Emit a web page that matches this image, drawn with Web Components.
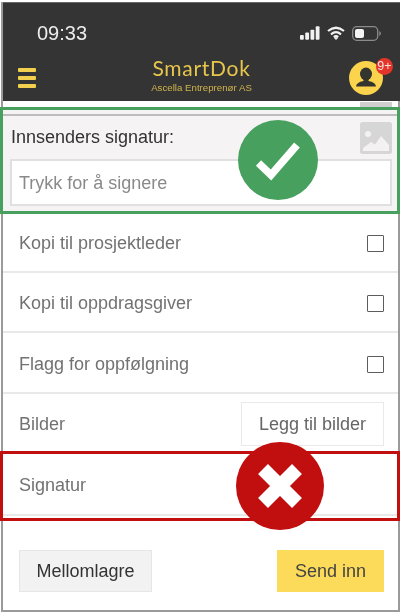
<!DOCTYPE html>
<html lang="nb">
<head>
<meta charset="utf-8">
<title>SmartDok</title>
<style>
html,body{margin:0;padding:0;background:#fff;font-family:"Liberation Sans",Arial,sans-serif}
body{width:400px;height:616px;overflow:hidden}
</style>
</head>
<body>
<template id="t-app"><style>
:host{display:flex;flex-direction:column;box-sizing:border-box;width:399px;height:610px;margin:2px 0 0 1px;border:solid #9a9a9a;border-width:0 2px 2px 2px;background:#fff;filter:blur(.35px)}
</style><slot></slot></template>

<template id="t-top"><style>
:host{display:block;height:99px;margin-right:-2px;background:#343434;border-top:1px solid #666;box-sizing:border-box}
.status{display:flex;align-items:center;justify-content:space-between;height:60px;padding:0 19px 0 34px;box-sizing:border-box}
.time{font:20px "Liberation Sans",Arial,sans-serif;color:#ececec}
.icons{display:flex;align-items:center;gap:7px}
svg{display:block}
.bar{display:grid;grid-template-columns:1fr auto 1fr;align-items:start;padding:0 17px 0 15px;margin-top:-2px}
.burger{display:flex;flex-direction:column;gap:4px;width:18px;padding-top:7px}
.burger i{display:block;height:4px;background:#f2d04e;border-radius:1px}
.brand{display:flex;flex-direction:column;align-items:center;margin:-5.500px 0 0 2px}
.name{font:400 21px/24px Lato,"Noto Sans",sans-serif;letter-spacing:.7px;color:#e6c64c}
.sub{font:9.700px/12px "Liberation Sans",Arial,sans-serif;color:#d0b44c;margin-top:2px}
.user{justify-self:end;position:relative;width:34px;height:34px;border-radius:50%;background:#fbd34d}
.badge{position:absolute;left:27px;top:-3px;width:17px;height:17px;border-radius:50%;background:#e3352a;color:#f6e3dd;font:12.5px/17px "Liberation Sans",Arial,sans-serif;text-align:center}
</style>
<div class="status"><span class="time">09:33</span>
<span class="icons">
<svg width="20" height="14" viewBox="0 0 21 14" fill="#f2f2f2"><rect x="0" y="9" width="4" height="5" rx="1"/><rect x="5.500" y="6.500" width="4" height="7.500" rx="1"/><rect x="11" y="3.500" width="4" height="10.500" rx="1"/><rect x="16.500" y="0" width="4" height="14" rx="1"/></svg>
<svg width="18" height="14" viewBox="0 0 18 14" fill="none" stroke="#f2f2f2" stroke-width="2.200"><path d="M1 5Q9-1.500 17 5"/><path d="M4 8.300Q9 4 14 8.300"/><path d="M6.800 11Q9 9.400 11.200 11"/><path d="M7.500 11.800L9 13.500L10.500 11.800Z" fill="#f2f2f2" stroke-width="1"/></svg>
<svg width="29" height="15" viewBox="0 0 29 15" fill="none"><rect x=".7" y=".7" width="25" height="13.600" rx="4" stroke="#8b8b8b" stroke-width="1.300"/><rect x="3" y="3" width="9" height="9" rx="2" fill="#f4f4f4"/><path d="M27.300 5v5q1.600-.8 1.600-2.500T27.300 5z" fill="#8b8b8b"/></svg>
</span></div>
<div class="bar">
<div class="burger"><i></i><i></i><i></i></div>
<div class="brand"><span class="name">SmartDok</span><span class="sub">Ascella Entreprenør AS</span></div>
<div class="user"><svg width="34" height="34" viewBox="0 0 34 34" fill="#35352f"><ellipse cx="17" cy="13" rx="6" ry="6.500"/><path d="M14.500 17.500L14.500 20Q7.500 21 7 25.500L27 25.500Q26.500 21 19.500 20L19.500 17.500Z"/></svg><span class="badge">9+</span></div>
</div></template>

<template id="t-scroll"><style>
:host{display:flex;justify-content:flex-end;height:9px;padding-right:6px;background:#fff}
i{display:block;width:32px;height:5px;margin-top:1px;background:#d0d0d0}
</style><i></i></template>

<template id="t-panel"><style>
:host{display:block;position:relative;height:102px;box-sizing:border-box;background:#f5f3f4;padding:4px 6px 0 7px;font:18px "Liberation Sans",Arial,sans-serif}
.rule{height:1.500px;background:#bdbdbd;margin:0 -6px 0 -7px}
.head{display:flex;justify-content:space-between;height:43.500px}
.label{color:#333;line-height:20px;padding:11px 0 0 1px;box-sizing:border-box}
.photo{margin-top:6.500px}
.input{box-sizing:border-box;height:47px;border:2px solid #e0e0e0;background:#fff;color:#8a8a8a;padding:1px 7px 0;line-height:43px}
</style>
<div class="rule"></div>
<div class="head"><span class="label"><slot name="label"></slot></span>
<svg class="photo" width="32" height="32" viewBox="0 0 32 32"><rect width="32" height="32" rx="2.500" fill="#d6d6d6"/><circle cx="8" cy="12" r="3" fill="#f3f1f2"/><path d="M3 29L3 26L11 20L15 22.500L21 14L29 23L29 29Z" fill="#f3f1f2"/></svg></div>
<div class="input"><slot name="hint"></slot></div></template>

<template id="t-row"><style>
:host{display:flex;align-items:center;justify-content:space-between;box-sizing:border-box;height:60.500px;padding:3.500px 14px 0 16px;border-bottom:2px solid #e9e9e9;color:#727272;font:18px "Liberation Sans",Arial,sans-serif}
:host([tall]){height:58.500px;padding-top:2.500px;border-bottom:0}
:host([last]){height:64px;padding-top:4px}
</style><slot></slot><slot name="end"></slot></template>

<template id="t-check"><style>
:host{display:block;width:17px;height:17px;box-sizing:border-box;border:1.500px solid #5c5c5c;border-radius:1px;background:#fff}
</style></template>

<template id="t-btn"><style>
:host{display:flex;align-items:center;justify-content:center;box-sizing:border-box;height:42px;border:1.500px solid #e9e9e9;background:#fff;color:#666;font:18px "Liberation Sans",Arial,sans-serif;width:var(--w,auto)}
:host([kind=plain]){height:44px}
:host([kind=grey]){background:#f2f2f2;color:#333;border-color:#e6e6e6}
:host([kind=yellow]){background:#fddb5a;color:#444;border-color:#fddb5a}
</style><slot></slot></template>

<template id="t-foot"><style>
:host{display:flex;justify-content:space-between;padding:34px 14px 0 16px}
</style><slot></slot></template>

<template id="t-mark"><style>
:host{display:block;position:relative}
.box{position:absolute;inset:var(--inset);border:3px solid var(--c);pointer-events:none;z-index:2}
.dot{position:absolute;left:var(--x);top:var(--y);width:var(--d);height:var(--d);z-index:3}
svg{display:block;width:100%;height:100%}
</style><slot></slot><div class="box"></div><div class="dot"></div></template>

<sd-app>
  <sd-top></sd-top>
  <sd-scroll></sd-scroll>
  <sd-mark kind="ok">
    <sd-panel><span slot="label">Innsenders signatur:</span><span slot="hint">Trykk for å signere</span></sd-panel>
  </sd-mark>
  <sd-row>Kopi til prosjektleder<sd-check slot="end"></sd-check></sd-row>
  <sd-row>Kopi til oppdragsgiver<sd-check slot="end"></sd-check></sd-row>
  <sd-row>Flagg for oppfølgning<sd-check slot="end"></sd-check></sd-row>
  <sd-row tall>Bilder<sd-btn slot="end" kind="plain" style="--w:143px">Legg til bilder</sd-btn></sd-row>
  <sd-mark kind="bad">
    <sd-row last>Signatur</sd-row>
  </sd-mark>
  <sd-foot>
    <sd-btn kind="grey" style="--w:133px">Mellomlagre</sd-btn>
    <sd-btn kind="yellow" style="--w:107px">Send inn</sd-btn>
  </sd-foot>
</sd-app>

<script>
function simple(tag, tpl){
  customElements.define(tag, class extends HTMLElement{
    constructor(){
      super();
      this.attachShadow({mode:'open'}).appendChild(document.getElementById(tpl).content.cloneNode(true));
    }
  });
}
simple('sd-app','t-app');
simple('sd-top','t-top');
simple('sd-scroll','t-scroll');
simple('sd-panel','t-panel');
simple('sd-row','t-row');
simple('sd-check','t-check');
simple('sd-btn','t-btn');
simple('sd-foot','t-foot');
const MARKS={
  ok:{c:'#47a05d',inset:'-3px -2px -2px -3px',x:'235px',y:'10px',d:'80px',
    svg:'<svg viewBox="0 0 80 80"><circle cx="40" cy="40" r="40" fill="#47a05d"/><path d="M20.500 43L33 55L59 25" fill="none" stroke="#fff" stroke-width="7.500"/></svg>'},
  bad:{c:'#c10e0e',inset:'-1px -2px -5px -3px',x:'233px',y:'-10px',d:'88px',
    svg:'<svg viewBox="0 0 88 88"><circle cx="44" cy="44" r="44" fill="#c10e0e"/><path d="M27 27L61 61M61 27L27 61" fill="none" stroke="#fff" stroke-width="14"/></svg>'}
};
customElements.define('sd-mark', class extends HTMLElement{
  constructor(){
    super();
    this.attachShadow({mode:'open'}).appendChild(document.getElementById('t-mark').content.cloneNode(true));
  }
  connectedCallback(){
    const m=MARKS[this.getAttribute('kind')];
    this.style.setProperty('--c',m.c);
    this.style.setProperty('--inset',m.inset);
    this.style.setProperty('--x',m.x);
    this.style.setProperty('--y',m.y);
    this.style.setProperty('--d',m.d);
    this.shadowRoot.querySelector('.dot').innerHTML=m.svg;
  }
});
</script>
</body>
</html>
